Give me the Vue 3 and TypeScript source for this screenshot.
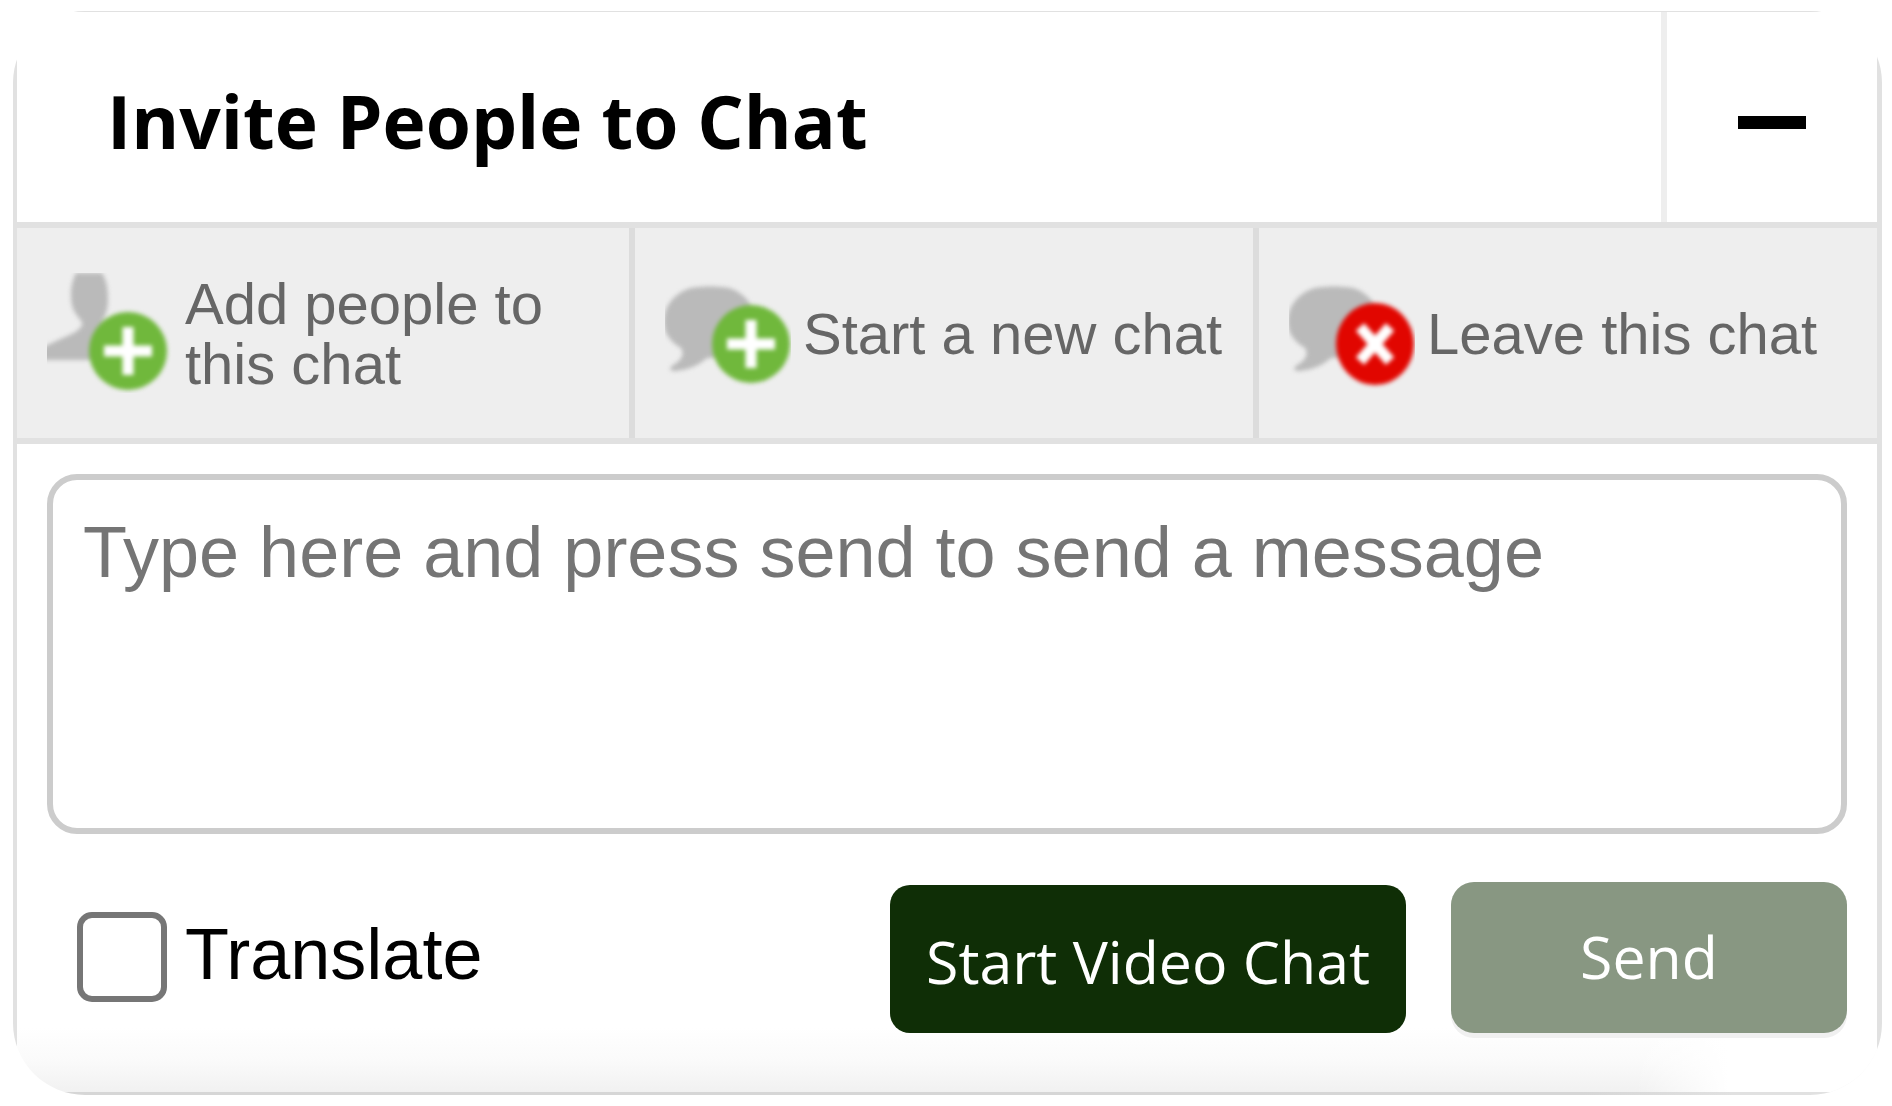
<script setup lang="ts">
import { ref } from 'vue'

type Action = { id: string; label: string; shape: 'person' | 'bubble'; badge: 'plus' | 'cross' }

const actions: Action[] = [
  { id: 'add', label: 'Add people to this chat', shape: 'person', badge: 'plus' },
  { id: 'start', label: 'Start a new chat', shape: 'bubble', badge: 'plus' },
  { id: 'leave', label: 'Leave this chat', shape: 'bubble', badge: 'cross' },
]

const message = ref('')
const translate = ref(false)
</script>

<template>
  <main class="panel">
    <div class="sheet">
      <header class="header">
        <h1 class="title">Invite People to Chat</h1>
        <button class="minimize" type="button" aria-label="Minimize">
          <span class="dash"></span>
        </button>
      </header>

      <nav class="toolbar">
        <button v-for="action in actions" :key="action.id" class="action" type="button">
          <svg class="icon" viewBox="0 0 126 120" aria-hidden="true">
            <g class="soft">
              <path
                v-if="action.shape === 'person'"
                fill="#bababa"
                d="M29 0H55C60 8 61 17 61 27C61 40 56 47 51 54V62L80 74V87H-6V76C10 66 24 63 31 57C37 52 36 50 32 45C26 38 24 32 24 22C24 13 26 6 29 0Z"
              />
              <path
                v-else
                fill="#bababa"
                d="M26 15C38 13 52 13 64 15C80 20 90 33 91 49C91 67 75 84 42 85C33 93 20 98 8 98C3 97 6 93 10 91C18 86 19 80 16 75C4 68 -1 59 -1 49C-1 33 9 20 26 15Z"
              />
              <template v-if="action.badge === 'plus'">
                <g :transform="action.shape === 'person' ? 'translate(81 78)' : 'translate(86 71)'">
                  <circle r="39" fill="#70b83c" />
                  <path d="M-24 0H24M0 -24V24" stroke="#fff" stroke-width="11" />
                </g>
              </template>
              <g v-else transform="translate(86 71)">
                <ellipse rx="39" ry="41" fill="#e10600" />
                <path d="M-15 -17L15 17M15 -17L-15 17" stroke="#fff" stroke-width="11" />
              </g>
            </g>
          </svg>
          <span class="action-label">{{ action.label }}</span>
        </button>
      </nav>

      <form class="composer" @submit.prevent>
        <textarea
          v-model="message"
          class="message"
          aria-label="Message"
          placeholder="Type here and press send to send a message"
        ></textarea>
        <div class="controls">
          <label class="translate">
            <input v-model="translate" class="check" type="checkbox" />
            <span class="translate-label">Translate</span>
          </label>
          <div class="buttons">
            <button class="button video" type="button">Start Video Chat</button>
            <button class="button send" type="submit">Send</button>
          </div>
        </div>
      </form>
    </div>
  </main>
</template>

<style>
body {
  margin: 0;
  background: #fff;
}
</style>

<style scoped>
/* The frame is four straight strips cut off by the rounded outline. */
.panel {
  margin: 11px 10px 11px 13px;
  padding: 1px 5px 3px 4px;
  border-radius: 72px;
  overflow: hidden;
  background:
    linear-gradient(#e1e1e1, #e1e1e1) top / 100% 1px no-repeat,
    linear-gradient(to right, #d6d6d6 84%, #e1e1e1 92%) bottom / 100% 3px no-repeat,
    linear-gradient(#e1e1e1, #e1e1e1) left / 4px 100% no-repeat,
    linear-gradient(#e1e1e1, #e1e1e1) right / 5px 100% no-repeat;
  font-family: "Liberation Sans", Arial, sans-serif;
}

.sheet {
  background:
    linear-gradient(to right, transparent 87%, #fff 92%) bottom / 100% 64px no-repeat,
    linear-gradient(to top, #f1f1f1, #fafafa 30px, #fff 64px);
}

button {
  margin: 0;
  border: 0;
  cursor: pointer;
}

.header {
  display: flex;
  height: 210px;
  border-bottom: 6px solid #e1e1e1;
}

.title {
  flex: 1;
  align-self: center;
  margin: 0;
  padding: 8px 0 0 90px;
  font: bold 73px/100px "Open Sans", "Noto Sans", sans-serif;
  color: #000;
}

.minimize {
  display: flex;
  align-items: center;
  justify-content: center;
  width: 216px;
  border-left: 6px solid #eee;
  background: none;
}

.dash {
  width: 68px;
  height: 13px;
  margin-top: 10px;
  background: #000;
}

.toolbar {
  display: grid;
  grid-template-columns: 103fr 104fr 103fr;
  height: 210px;
  border-bottom: 6px solid #e1e1e1;
  background: #eee;
}

.action {
  display: flex;
  align-items: center;
  gap: 12px;
  min-width: 0;
  padding: 0 0 0 30px;
  background: none;
  color: #666;
  font: 58px/60px "Liberation Sans", Arial, sans-serif;
  text-align: left;
}

.action:not(:last-child) {
  border-right: 6px solid #dcdcdc;
}

.action-label {
  padding-top: 2px;
}

.icon {
  flex: none;
  width: 126px;
  height: 120px;
}

.soft {
  filter: blur(2px);
}

.composer {
  padding: 30px 30px 59px;
}

.message {
  display: block;
  box-sizing: border-box;
  width: 100%;
  height: 360px;
  padding: 30px;
  border: 6px solid #ccc;
  border-radius: 30px;
  background: #fff;
  color: #000;
  font: 72px/84px "Liberation Sans", Arial, sans-serif;
  resize: none;
}

.message::placeholder {
  color: #757575;
}

.controls {
  display: flex;
  align-items: flex-end;
  justify-content: space-between;
  margin-top: 48px;
}

.translate {
  display: flex;
  align-items: center;
  gap: 18px;
  padding: 0 0 31px 30px;
  font-size: 72px;
  line-height: 84px;
  color: #000;
}

.translate-label {
  padding-bottom: 6px;
}

.check {
  appearance: none;
  box-sizing: border-box;
  width: 90px;
  height: 90px;
  margin: 0;
  border: 6px solid #767676;
  border-radius: 15px;
  background: #fff;
}

.check:checked {
  background: #767676;
}

.buttons {
  display: flex;
  align-items: flex-end;
  gap: 45px;
}

.button {
  height: 148px;
  border-radius: 20px;
  color: #fff;
  font: 59px/80px "Open Sans", "Noto Sans", sans-serif;
}

.video {
  width: 516px;
  padding: 4px 0 0;
  background: #0f2e06;
}

.send {
  width: 396px;
  height: 151px;
  padding: 0 0 4px;
  border-radius: 23px;
  background: #889782;
  box-shadow: 0 5px 0 #f0f0f0;
}
</style>
